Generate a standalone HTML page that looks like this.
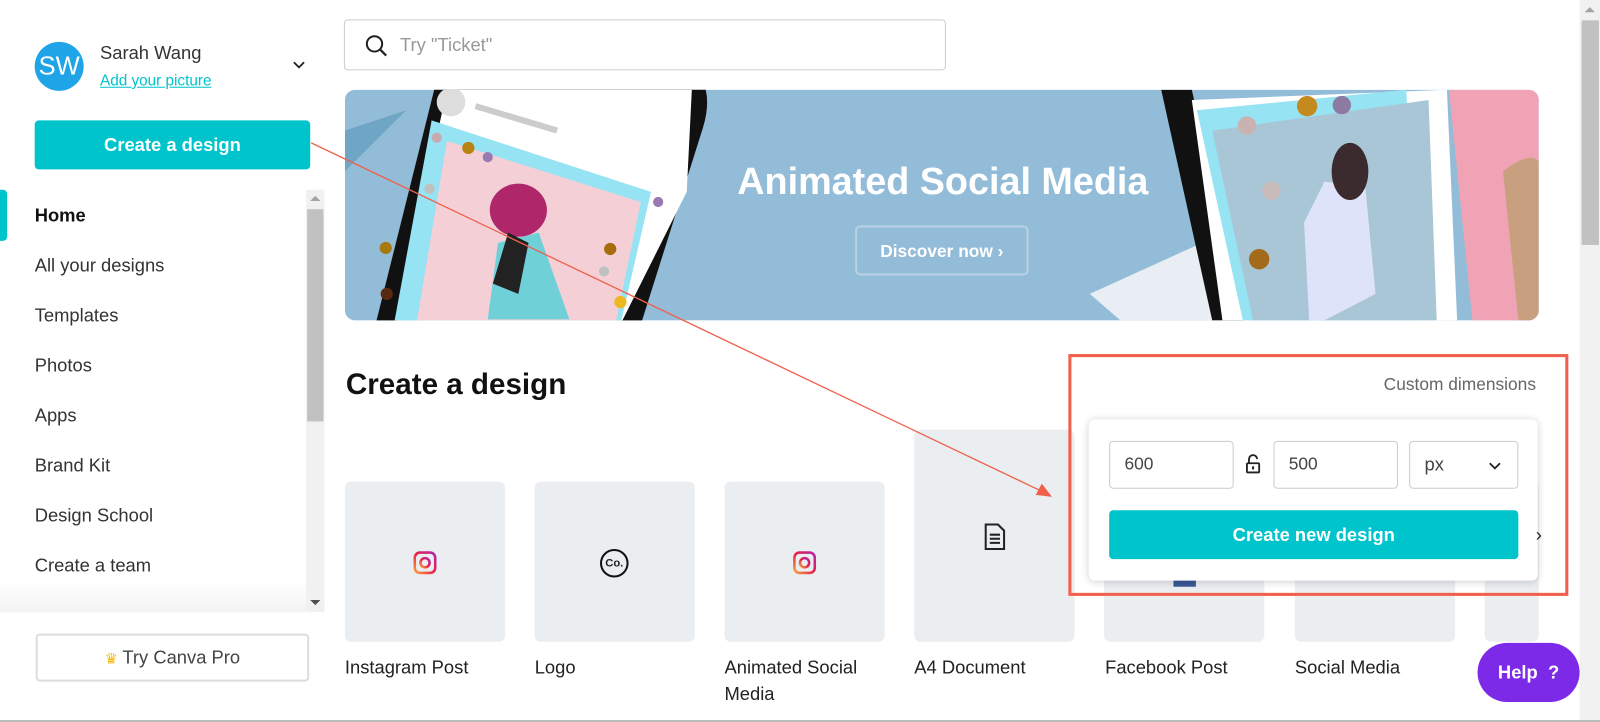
<!DOCTYPE html>
<html><head><meta charset="utf-8"><style>
*{box-sizing:border-box;margin:0;padding:0}
body{width:1600px;height:722px;overflow:hidden;background:#fff;font-family:"Liberation Sans",sans-serif;position:relative;color:#222}
#w{position:absolute;left:0;top:0;width:1568px;height:708px;transform:scale(1.0204);transform-origin:0 0}
.a{position:absolute}
.nav{font-size:18px;color:#333;left:34px}
.card{position:absolute;background:#ebeef1;border-radius:6px;width:157px}
.lbl{position:absolute;font-size:18px;color:#222;line-height:26px}
.inp{position:absolute;border:1px solid #ccc;border-radius:4px;height:47px;font-size:17px;color:#444;padding:12px 14px}
</style></head><body><div id="w">
<!-- sidebar -->
<div class="a" style="left:34px;top:41px;width:48px;height:48px;border-radius:50%;background:#20a4e8;color:#fff;font-size:25px;text-align:center;line-height:48px">SW</div>
<div class="a" style="left:98px;top:42px;font-size:18px;color:#333">Sarah Wang</div>
<div class="a" style="left:98px;top:71px;font-size:15px;color:#00c4cc;text-decoration:underline">Add your picture</div>
<svg class="a" style="left:286px;top:59px" width="14" height="10"><path d="M2 2l5 5 5-5" stroke="#222" stroke-width="1.8" fill="none"/></svg>
<div class="a" style="left:34px;top:118px;width:270px;height:48px;background:#00c4cc;border-radius:4px;color:#fff;font-weight:bold;font-size:18px;text-align:center;line-height:48px">Create a design</div>
<div class="a" style="left:0;top:186px;width:7px;height:50px;background:#00c4cc;border-radius:0 4px 4px 0"></div>
<div class="a nav" style="top:201px;font-weight:bold;color:#111">Home</div>
<div class="a nav" style="top:250px">All your designs</div>
<div class="a nav" style="top:299px">Templates</div>
<div class="a nav" style="top:348px">Photos</div>
<div class="a nav" style="top:397px">Apps</div>
<div class="a nav" style="top:446px">Brand Kit</div>
<div class="a nav" style="top:495px">Design School</div>
<div class="a nav" style="top:544px">Create a team</div>
<div class="a" style="left:0;top:570px;width:300px;height:30px;background:linear-gradient(#fff0,#f3f3f3)"></div>
<div class="a" style="left:300px;top:186px;width:18px;height:414px;background:#f1f1f1"></div>
<div class="a" style="left:301px;top:205px;width:16px;height:208px;background:#c1c1c1"></div>
<div class="a" style="left:304px;top:192px;border:5px solid transparent;border-bottom:5px solid #a3a3a3;border-top:0"></div>
<div class="a" style="left:304px;top:588px;border:5px solid transparent;border-top:5px solid #505050;border-bottom:0"></div>
<div class="a" style="left:35px;top:621px;width:268px;height:47px;border:2px solid #ddd;border-radius:4px;text-align:center;line-height:43px;font-size:18px;color:#444"><span style="color:#f7b500;font-size:14px">♛</span> Try Canva Pro</div>
<!-- search -->
<div class="a" style="left:337px;top:19px;width:590px;height:50px;border:1px solid #ccc;border-radius:4px"></div>
<svg class="a" style="left:357px;top:33px" width="24" height="24"><circle cx="10" cy="10" r="7.5" stroke="#222" stroke-width="2" fill="none"/><path d="M15.5 15.5l6 6" stroke="#222" stroke-width="2.2"/></svg>
<div class="a" style="left:392px;top:34px;font-size:18px;color:#999">Try "Ticket"</div>
<!-- banner -->
<svg class="a" style="left:338px;top:88px" width="1170" height="226" viewBox="0 0 1170 226">
<defs><clipPath id="c"><rect width="1170" height="226" rx="10"/></clipPath></defs>
<g clip-path="url(#c)">
<rect width="1170" height="226" fill="#93bcd8"/>
<path d="M0 40L60 20L0 80z" fill="#6fa6c6"/>
<path d="M30 230L90 -10L350 -10Q360 10 350 40L290 230z" fill="#111"/>
<path d="M50 230L100 0L340 0L335 100L270 230z" fill="#fff"/>
<path d="M48 230L85 30L300 100L270 230z" fill="#95e3f3"/>
<path d="M70 230L100 50L290 110L265 230z" fill="#f4d0d6"/>
<circle cx="104" cy="12" r="14" fill="#ddd"/><path d="M128 16L208 40" stroke="#ccc" stroke-width="6"/>
<path d="M140 225L150 150L190 140L220 225z" fill="#6fd0d8"/>
<ellipse cx="170" cy="118" rx="28" ry="26" fill="#b0266a"/>
<path d="M160 140L180 150L170 200L145 190z" fill="#222"/>
<path d="M730 200L840 150L870 226L760 226z" fill="#e8eef4"/>
<path d="M800 0L830 0L880 226L850 226z" fill="#111"/>
<path d="M830 10L1080 0L1090 226L860 226z" fill="#fff"/>
<path d="M835 20L1040 0L1055 226L880 226z" fill="#95e3f3"/>
<path d="M850 40L1062 10L1070 226L890 226z" fill="#a9c6d6"/>
<path d="M940 130L960 90L1000 95L1010 200L960 226L945 226z" fill="#dfe3fa"/>
<ellipse cx="985" cy="80" rx="18" ry="28" fill="#3b2b2f"/>
<path d="M1082 0L1170 0L1170 226L1105 226z" fill="#f0a3b4"/>
<path d="M1135 80Q1160 60 1170 70L1170 226L1150 226z" fill="#c8a07f"/>
<circle cx="943" cy="16" r="10" fill="#c58a1e"/><circle cx="977" cy="15" r="9" fill="#8d7aa3"/><circle cx="884" cy="35" r="9" fill="#cbb2b2"/><circle cx="908" cy="99" r="9" fill="#cbbcbc"/><circle cx="896" cy="166" r="10" fill="#a36a1a"/>
<circle cx="90" cy="47" r="5" fill="#c7a9b2"/><circle cx="121" cy="57" r="6" fill="#b8820e"/><circle cx="140" cy="66" r="5" fill="#9a7ab4"/><circle cx="83" cy="97" r="5" fill="#c0c0c0"/><circle cx="40" cy="155" r="6" fill="#a7790e"/><circle cx="41" cy="200" r="6" fill="#5a2a10"/><circle cx="260" cy="156" r="6" fill="#a76c0c"/><circle cx="307" cy="110" r="5" fill="#9a7ab4"/><circle cx="270" cy="208" r="6" fill="#f0b820"/><circle cx="254" cy="178" r="5" fill="#c0c0c0"/>
<text x="586" y="102" font-family="Liberation Sans" font-weight="bold" font-size="37" fill="#fff" text-anchor="middle">Animated Social Media</text>
<rect x="501" y="134" width="168" height="47" rx="4" fill="none" stroke="#b9d2e3" stroke-width="2"/>
<text x="585" y="164" font-family="Liberation Sans" font-weight="bold" font-size="17" fill="#fff" text-anchor="middle">Discover now ›</text>
</g></svg>
<!-- create -->
<div class="a" style="left:339px;top:361px;font-size:29px;font-weight:bold;color:#111">Create a design</div>
<div class="card" style="left:338px;top:472px;height:157px"></div>
<div class="card" style="left:524px;top:472px;height:157px"></div>
<div class="card" style="left:710px;top:472px;height:157px"></div>
<div class="card" style="left:896px;top:421px;height:208px"></div>
<div class="card" style="left:1082px;top:472px;height:157px"></div>
<div class="card" style="left:1269px;top:472px;height:157px"></div>
<div class="card" style="left:1455px;top:472px;height:157px;width:53px"></div>
<svg class="a" style="left:405px;top:540px" width="23" height="23"><defs><linearGradient id="g" x1="0" y1="1" x2="1" y2="0"><stop offset="0" stop-color="#f9a03f"/><stop offset=".5" stop-color="#e8204d"/><stop offset="1" stop-color="#b02aaa"/></linearGradient></defs><rect x="1.5" y="1.5" width="20" height="20" rx="5" fill="none" stroke="url(#g)" stroke-width="2.5"/><circle cx="11.5" cy="11.5" r="4.5" fill="none" stroke="url(#g)" stroke-width="2.5"/></svg>
<svg class="a" style="left:777px;top:540px" width="23" height="23"><rect x="1.5" y="1.5" width="20" height="20" rx="5" fill="none" stroke="url(#g)" stroke-width="2.5"/><circle cx="11.5" cy="11.5" r="4.5" fill="none" stroke="url(#g)" stroke-width="2.5"/></svg>
<div class="a" style="left:588px;top:538px;width:28px;height:28px;border:2px solid #111;border-radius:50%;font-size:11px;text-align:center;line-height:24px;font-weight:bold">Co.</div>
<svg class="a" style="left:964px;top:513px" width="22" height="26"><path d="M2 1h12l6 6v18H2z" fill="none" stroke="#222" stroke-width="2"/><path d="M6 11h10M6 15h10M6 19h10" stroke="#222" stroke-width="2"/></svg>
<div class="a" style="left:1150px;top:566px;width:22px;height:9px;background:#3b5998"></div>
<div class="lbl" style="left:338px;top:641px">Instagram Post</div>
<div class="lbl" style="left:524px;top:641px">Logo</div>
<div class="lbl" style="left:710px;top:641px">Animated Social<br>Media</div>
<div class="lbl" style="left:896px;top:641px">A4 Document</div>
<div class="lbl" style="left:1083px;top:641px">Facebook Post</div>
<div class="lbl" style="left:1269px;top:641px">Social Media</div>
<!-- custom -->
<div class="a" style="left:1047px;top:347px;width:490px;height:237px;border:3px solid #f0604d"></div>
<div class="a" style="left:1356px;top:367px;font-size:17px;color:#666">Custom dimensions</div>
<div class="a" style="left:1067px;top:411px;width:440px;height:158px;background:#fff;border-radius:6px;box-shadow:0 1px 8px rgba(0,0,0,.18)"></div>
<div class="inp" style="left:1087px;top:432px;width:122px">600</div>
<svg class="a" style="left:1220px;top:445px" width="16" height="20"><path d="M4 9V5a4 4 0 0 1 8 0" fill="none" stroke="#222" stroke-width="1.8"/><rect x="2" y="9" width="12" height="9" rx="1" fill="none" stroke="#222" stroke-width="1.8"/><rect x="7" y="12" width="2" height="3" fill="#222"/></svg>
<div class="inp" style="left:1248px;top:432px;width:122px">500</div>
<div class="inp" style="left:1381px;top:432px;width:107px;font-size:18px">px<svg style="position:absolute;left:76px;top:19px" width="14" height="10"><path d="M2 2l5 5 5-5" stroke="#222" stroke-width="1.8" fill="none"/></svg></div>
<div class="a" style="left:1087px;top:500px;width:401px;height:48px;background:#00c4cc;border-radius:4px;color:#fff;font-weight:bold;font-size:18px;text-align:center;line-height:48px">Create new design</div>
<div class="a" style="left:1505px;top:514px;font-size:18px;color:#222">›</div>
<!-- help -->
<div class="a" style="left:1448px;top:630px;width:100px;height:58px;border-radius:29px;background:#7d2ae8;color:#fff;font-weight:bold;font-size:18px;text-align:center;line-height:58px">Help&nbsp; ?</div>
<!-- right scrollbar -->
<div class="a" style="left:1548px;top:0;width:20px;height:708px;background:#f1f1f1"></div>
<div class="a" style="left:1550px;top:20px;width:17px;height:220px;background:#c1c1c1"></div>
<div class="a" style="left:1553px;top:7px;border:5px solid transparent;border-bottom:5px solid #a3a3a3;border-top:0"></div>
<!-- arrow -->
<svg class="a" style="left:0;top:0" width="1568" height="708"><path d="M305 140L1022 482" stroke="#f0604d" stroke-width="1.3"/><path d="M1031 487L1015 485L1021 474z" fill="#f0604d"/></svg>
</div>
<div class="a" style="left:0;top:720px;width:1600px;height:2px;background:#bbb"></div>
</body></html>
